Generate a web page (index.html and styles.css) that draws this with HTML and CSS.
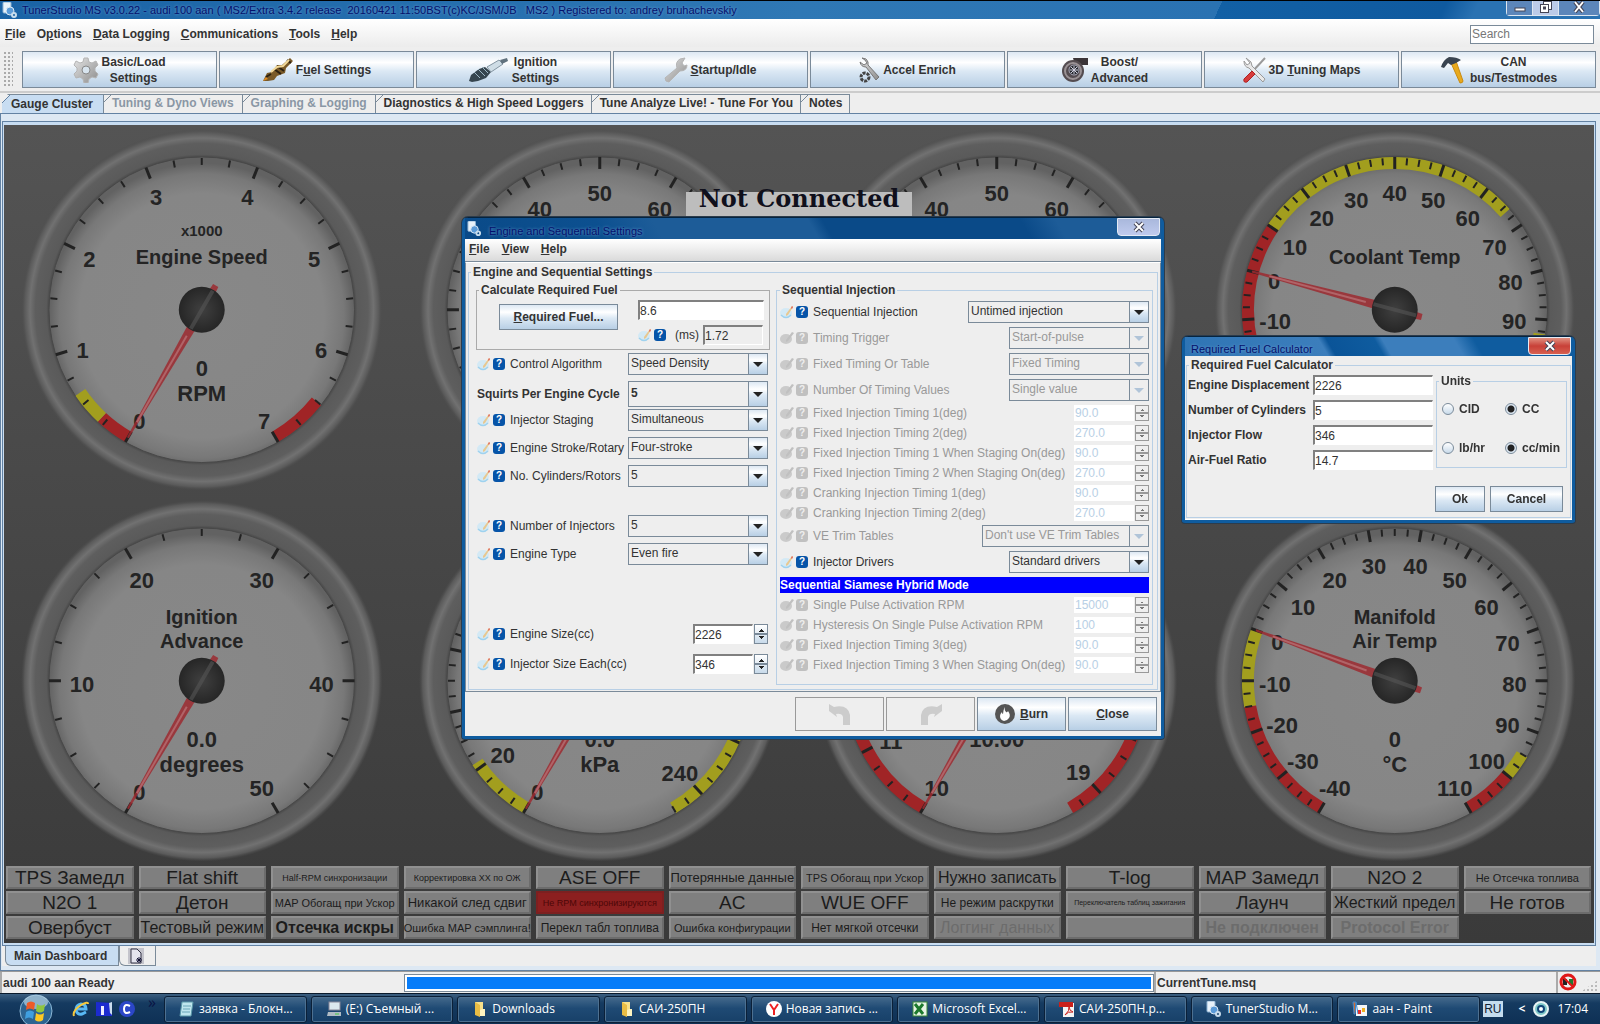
FILE: index.html
```html
<!DOCTYPE html>
<html lang="ru">

<head>
    <meta charset="UTF-8">
    <meta name="viewport" content="width=device-width, initial-scale=1.0">
    <title>TunerStudio MS</title>
    <link rel="stylesheet" href="styles.css">
</head>

<body>
    <!-- shared icons -->
    <svg class="defs" width="0" height="0">
        <defs>
            <symbol id="note" viewBox="0 0 14 14">
                <ellipse cx="6" cy="8" rx="6" ry="5" fill="#d3e9f5" />
                <path d="M1 10q5 5 10 0" fill="none" stroke="#9fd2ee" stroke-width="1.5" />
                <path d="M6 9l6-8 1 1-5 8-2 1z" fill="#e8c890" />
                <path d="M12 1l1 1-1 2-1-1z" fill="#e0665a" />
            </symbol>
            <symbol id="note-off" viewBox="0 0 14 14">
                <ellipse cx="6" cy="8" rx="6" ry="5" fill="#cacaca" />
                <path d="M6 9l6-8 2 1-6 8-2 1z" fill="#c0c0c0" />
            </symbol>
            <symbol id="app" viewBox="0 0 16 16">
                <rect x="1" y="0" width="8" height="11" rx="1" fill="#e8f2fa" stroke="#8fb4d4" />
                <circle cx="8" cy="9" r="4" fill="#5b9bd8" stroke="#dceaf6" />
                <circle cx="12" cy="13" r="2" fill="none" stroke="#c8dcec" stroke-width="2" />
            </symbol>
            <symbol id="folder" viewBox="0 0 16 16">
                <path d="M3 1h8v13H3z" fill="#f7e08a" />
                <path d="M3 1l5 3v12l-5-2z" fill="#e9bd45" />
                <path d="M11 8h2v7H8V9z" fill="#fdf3c0" />
            </symbol>
            <radialGradient id="face" cx="50%" cy="52%" r="50%">
                <stop offset="0" stop-color="#888" />
                <stop offset=".8" stop-color="#868686" />
                <stop offset=".93" stop-color="#787878" />
                <stop offset="1" stop-color="#626262" />
            </radialGradient>
            <radialGradient id="bezel">
                <stop offset=".84" stop-color="#444" />
                <stop offset=".86" stop-color="#5a5a5a" />
                <stop offset=".92" stop-color="#5e5e5e" />
                <stop offset=".95" stop-color="#717171" />
                <stop offset=".98" stop-color="#5a5a5a" />
                <stop offset="1" stop-color="#4c4c4c" stop-opacity="0" />
            </radialGradient>
            <radialGradient id="hub">
                <stop offset="0" stop-color="#404040" />
                <stop offset="1" stop-color="#262626" />
            </radialGradient>
            <linearGradient id="metal" x1="0" y1="0" x2="1" y2="1">
                <stop offset="0" stop-color="#e4e4e4" />
                <stop offset="1" stop-color="#8c8c8c" />
            </linearGradient>
        </defs>
    </svg>

    <header class="titlebar">
        <svg width="16" height="16"><use href="#app" /></svg>
        <span class="title-text">TunerStudio MS v3.0.22 - audi 100 aan ( MS2/Extra 3.4.2 release&nbsp; 20160421 11:50BST(c)KC/JSM/JB&nbsp;&nbsp; MS2 ) Registered to: andrey bruhachevskiy</span>
        <div class="win-buttons">
            <button type="button" aria-label="Minimize"><svg width="12" height="12" viewBox="0 0 12 12"><rect x="1" y="7" width="10" height="3" fill="#fff" stroke="#445" /></svg></button>
            <button type="button" class="light" aria-label="Restore"><svg width="12" height="12" viewBox="0 0 12 12" fill="#fff" stroke="#445"><rect x="3.500" y=".5" width="8" height="8" /><rect x=".5" y="3.500" width="8" height="8" /><rect x="3.500" y="6" width="2" height="2" /></svg></button>
            <button type="button" aria-label="Close"><svg width="12" height="12" viewBox="0 0 12 12"><path d="M2 1l8 10M10 1L2 11" stroke="#445" stroke-width="4" /><path d="M2 1l8 10M10 1L2 11" stroke="#fff" stroke-width="2" /></svg></button>
        </div>
    </header>

    <nav class="menubar">
        <a href="#"><u>F</u>ile</a>
        <a href="#">O<u>p</u>tions</a>
        <a href="#"><u>D</u>ata Logging</a>
        <a href="#"><u>C</u>ommunications</a>
        <a href="#"><u>T</u>ools</a>
        <a href="#"><u>H</u>elp</a>
        <input class="search" type="text" placeholder="Search" aria-label="Search">
    </nav>

    <div class="toolbar">
        <span class="grip"></span>
        <button type="button">
            <svg width="26" height="26" viewBox="0 0 26 26"><path d="M11 1h4l1 4 3 1 4-2 2 4-3 3v3l3 3-2 4-4-1-3 2-1 4h-4l-1-4-3-2-4 1-2-4 3-3v-3L1 8l2-4 4 2 3-1z" fill="url(#metal)" stroke="#b4b4b4" /><circle cx="13" cy="13" r="4" fill="#d8e4ee" stroke="#888" /></svg>
            <span>Basic/Load<br>Settings</span>
        </button>
        <button type="button">
            <svg width="32" height="26" viewBox="0 0 32 26"><path d="M1 24l4-8 5-1 5-7 5 0 8-7 3 3-7 7-1 5-8 3-3 4-6 1z" fill="#7a5a28" /><path d="M4 20l5-3M12 12l7 5M15 9l7 5M25 3l4 3" stroke="#2c2010" stroke-width="2" /><path d="M9 15l6-5 6-1 6-6" fill="none" stroke="#f2d898" stroke-width="2" /><path d="M1 24l3-4 2 2z" fill="#e08a20" /></svg>
            <span>F<u>u</u>el Settings</span>
        </button>
        <button type="button">
            <svg width="42" height="26" viewBox="0 0 42 26"><path d="M1 24l2-6 8-6 6-2 6 5-5 6-8 3-6 1z" fill="#36454f" /><path d="M6 15l6 6M10 12l7 7M14 10l6 6" stroke="#9fb8c6" stroke-width="1" /><path d="M19 10l12-7 4 4-12 8z" fill="#cfdde6" stroke="#8395a2" /><path d="M32 3l7-2 1 3-6 3z" fill="#61727e" /></svg>
            <span>Ignition<br>Settings</span>
        </button>
        <button type="button">
            <svg width="24" height="26" viewBox="0 0 24 26"><path d="M1 21L13 11q-2-6 3-9l5-1-3 5 2 3 3-1q0 6-7 6L5 25q-4 0-4-4z" fill="url(#metal)" stroke="#b5b5b5" /></svg>
            <span><u>S</u>tartup/Idle</span>
        </button>
        <button type="button">
            <svg width="22" height="26" viewBox="0 0 22 26"><path d="M3 1q5 0 6 4l0 3 11 12-3 3L7 10q-5 0-6-5l4 3 3-2-2-3z" fill="url(#metal)" stroke="#777" /><circle cx="6" cy="20" r="4" fill="none" stroke="#444" stroke-width="3" stroke-dasharray="3 1" /></svg>
            <span>Accel Enrich</span>
        </button>
        <button type="button">
            <svg width="28" height="26" viewBox="0 0 28 26"><path d="M12 1h15v7H14z" fill="#3b3538" /><circle cx="12" cy="14" r="11" fill="#544c50" /><circle cx="12" cy="14" r="8" fill="none" stroke="#9a9295" stroke-width="2" /><circle cx="13" cy="13" r="5" fill="#26282c" stroke="#aab" /><path d="M13 9v8M9 13h8M10 10l6 6M16 10l-6 6" stroke="#ccd" /></svg>
            <span>Boost/<br>Advanced</span>
        </button>
        <button type="button">
            <svg width="24" height="26" viewBox="0 0 24 26"><path d="M22 1L9 15" stroke="#9a9a9a" stroke-width="2" /><path d="M3 1l5 4 1 4 13 13-2 3L6 11q-5-1-5-7l3 4 3-2z" fill="#e8e8e8" stroke="#999" /><path d="M9 14l3 3-8 8q-4 1-3-3z" fill="#d63c3c" stroke="#b02020" /></svg>
            <span>3D <u>T</u>uning Maps</span>
        </button>
        <button type="button" class="hammer">
            <svg width="26" height="28" viewBox="0 0 26 28"><path d="M11 7l5-2 7 20q0 2-3 2z" fill="#e8a91c" stroke="#c98a10" /><path d="M1 11q2-7 8-10 8 0 12 3l-5 3-5 2-3-2-4 5z" fill="#3a4450" /></svg>
            <span>CAN<br>bus/Testmodes</span>
        </button>
    </div>

    <nav class="tabs">
        <a href="#" class="tab active">Gauge Cluster</a>
        <a href="#" class="tab off">Tuning &amp; Dyno Views</a>
        <a href="#" class="tab off">Graphing &amp; Logging</a>
        <a href="#" class="tab">Diagnostics &amp; High Speed Loggers</a>
        <a href="#" class="tab">Tune Analyze Live! - Tune For You</a>
        <a href="#" class="tab">Notes</a>
    </nav>

    <main class="frame">
        <div class="frame-inner">
            <div class="dash">
                <div class="gauges" id="gauges"></div>
                <div class="indicators">
                    <span class="xl">TPS Замедл</span>
                    <span class="xl">Flat shift</span>
                    <span class="xs">Half-RPM синхронизации</span>
                    <span class="xs">Корректировка ХХ по ОЖ</span>
                    <span class="xl">ASE OFF</span>
                    <span class="md">Потерянные данные</span>
                    <span class="sm">TPS Обогащ при Ускор</span>
                    <span class="lg">Нужно записать</span>
                    <span class="xl">T-log</span>
                    <span class="xl">MAP Замедл</span>
                    <span class="xl">N2O 2</span>
                    <span class="sm">Не Отсечка топлива</span>

                    <span class="xl">N2O 1</span>
                    <span class="xl">Детон</span>
                    <span class="sm">MAP Обогащ при Ускор</span>
                    <span class="md">Никакой след сдвиг</span>
                    <span class="xs alert">Не RPM синхронизируются</span>
                    <span class="xl">AC</span>
                    <span class="xl">WUE OFF</span>
                    <span class="mid">Не режим раскрутки</span>
                    <span class="tiny">Переключатель таблиц зажигания</span>
                    <span class="xl">Лаунч</span>
                    <span class="lg">Жесткий предел</span>
                    <span class="xl">Не готов</span>

                    <span class="xl">Овербуст</span>
                    <span class="lg">Тестовый режим</span>
                    <span class="lg strong">Отсечка искры</span>
                    <span class="sm">Ошибка MAP сэмплинга!</span>
                    <span class="mid">Перекл табл топлива</span>
                    <span class="sm">Ошибка конфигурации</span>
                    <span class="mid">Нет мягкой отсечки</span>
                    <span class="lg faint">Логгинг данных</span>
                    <span></span>
                    <span class="lg strong faint">Не подключен</span>
                    <span class="lg strong faint">Protocol Error</span>
                </div>
                <div class="not-connected">Not Connected</div>
            </div>
        </div>
        <nav class="dash-tabs">
            <a href="#" class="active">Main Dashboard</a>
            <a href="#" aria-label="Add dashboard"><svg width="16" height="16" viewBox="0 0 16 16"><rect width="16" height="16" fill="#c4c4cc" /><path d="M3 1h6l4 4v10H3z" fill="#e4e4ee" stroke="#334" /><path d="M11 9v6M8 12h6M9 10l4 4M13 10l-4 4" stroke="#113" /></svg></a>
        </nav>
    </main>

    <footer class="status">
        <span class="cell ready">audi 100 aan Ready</span>
        <progress value="100" max="100" aria-label="Progress"></progress>
        <span class="cell tune">CurrentTune.msq</span>
        <span class="cell link"><svg width="18" height="18" viewBox="0 0 18 18"><path d="M4 6h4v6H4z" fill="#222" /><path d="M10 6h4v6h-4z" fill="#1f7a30" /><circle cx="9" cy="9" r="7" fill="none" stroke="#e01818" stroke-width="3" /><path d="M4 4l10 10" stroke="#e01818" stroke-width="2" /></svg></span>
        <span class="resize"></span>
    </footer>

    <footer class="taskbar">
        <button type="button" class="start" aria-label="Start"><svg width="36" height="30" viewBox="0 0 36 30"><circle cx="18" cy="17" r="16" fill="#2d6491" stroke="#8db8d6" /><ellipse cx="18" cy="8" rx="12" ry="7" fill="#b8d3e4" opacity=".7" /><path d="M9 9q4-3 8 0l-1 7q-4-3-8 0z" fill="#ee5a28" /><path d="M19 10q4 3 8 0l-1 7q-4 3-8 0z" fill="#8fc63f" /><path d="M8 18q4-3 8 0l-1 7q-4-3-8 0z" fill="#3f9fe0" /><path d="M18 19q4 3 8 0l-1 7q-4 3-8 0z" fill="#fdc823" /></svg></button>
        <div class="quick">
            <svg width="18" height="18" viewBox="0 0 18 18"><path d="M5 9h9q0-5-5-5-5 1-5 6 1 5 6 4l4-2" fill="none" stroke="#58b8f4" stroke-width="3" /><path d="M2 16q-2-5 7-11 7-4 7-1" fill="none" stroke="#f6c83c" stroke-width="2" /></svg>
            <svg width="16" height="16" viewBox="0 0 16 16"><path d="M0 1l16 1v13H0z" fill="#1c2bd0" /><path d="M5 5h3v9H5z" fill="#eef" /><path d="M13 2l3-1v13l-2-2z" fill="#cde" /></svg>
            <svg width="18" height="18" viewBox="0 0 18 18"><circle cx="9" cy="9" r="8" fill="#2b46c8" /><path d="M12 6q-6-3-6 3t6 3" fill="none" stroke="#fff" stroke-width="2" /></svg>
            <span class="more">»</span>
        </div>
        <div class="tasks">
            <button type="button"><svg width="16" height="16" viewBox="0 0 16 16"><path d="M3 1h11l-2 14H1z" fill="#bfe6ee" stroke="#5a98a8" /><path d="M4 5h8M4 8h7M3 11h8" stroke="#6aa6b8" /></svg>заявка - Блокн...</button>
            <button type="button"><svg width="16" height="16" viewBox="0 0 16 16"><rect x="3" y="1" width="11" height="8" fill="#dce8ee" stroke="#889" /><path d="M2 11h13v4H1z" fill="#b0bcc4" /><path d="M9 13h4" stroke="#4c4" /></svg>(E:) Съемный ...</button>
            <button type="button"><svg width="16" height="16"><use href="#folder" /></svg>Downloads</button>
            <button type="button"><svg width="16" height="16"><use href="#folder" /></svg>САИ-250ПН</button>
            <button type="button"><svg width="16" height="16" viewBox="0 0 16 16"><circle cx="8" cy="8" r="8" fill="#fff" /><path d="M4 3l4 6 4-6M8 8v6" fill="none" stroke="#e22" stroke-width="2" /></svg>Новая запись ...</button>
            <button type="button"><svg width="16" height="16" viewBox="0 0 16 16"><rect x="1" y="1" width="14" height="14" fill="#e8f4e4" stroke="#3a8a3a" /><path d="M3 3l8 10M11 3L3 13" stroke="#1d7a2d" stroke-width="3" /></svg>Microsoft Excel...</button>
            <button type="button"><svg width="16" height="16" viewBox="0 0 16 16"><path d="M4 2h11v14H4z" fill="#f4f4f4" /><rect y="1" width="14" height="5" fill="#c8201c" /><path d="M6 14q5-4 4-9 0 5 4 6-5-1-8 3z" fill="none" stroke="#c8201c" /></svg>САИ-250ПН.p...</button>
            <button type="button"><svg width="16" height="16"><use href="#app" /></svg>TunerStudio M...</button>
            <button type="button"><svg width="16" height="16" viewBox="0 0 16 16"><rect x="4" y="4" width="11" height="11" fill="#f4f6f8" /><path d="M1 1h3l-1 12H2zM4 1l2 12" fill="#d06a30" stroke="#3b8ad0" /><rect x="6" y="9" width="3" height="4" fill="#e03030" /><rect x="10" y="7" width="3" height="4" fill="#f0b020" /></svg>аан - Paint</button>
        </div>
        <div class="tray">
            <span class="lang">RU</span>
            <span class="arrow">&lt;</span>
            <svg width="16" height="16" viewBox="0 0 16 16"><circle cx="8" cy="8" r="7" fill="#7ec8c8" stroke="#e8f4f4" stroke-width="2" /><circle cx="8" cy="8" r="3" fill="#fff" stroke="#147" stroke-width="2" /></svg>
            <span class="clock">17:04</span>
        </div>
    </footer>

    <!-- engine settings window -->
    <section class="dialog settings">
        <header class="dialog-title">
            <svg width="15" height="15"><use href="#app" /></svg>
            <span class="title-text">Engine and Sequential Settings</span>
            <button type="button" class="close" aria-label="Close window"><svg width="14" height="12" viewBox="0 0 14 12"><path d="M3 2l8 8M11 2l-8 8" stroke="#445" stroke-width="4" /><path d="M3 2l8 8M11 2l-8 8" stroke="#fff" stroke-width="2" /></svg></button>
        </header>
        <nav class="dialog-menu">
            <a href="#"><u>F</u>ile</a>
            <a href="#"><u>V</u>iew</a>
            <a href="#"><u>H</u>elp</a>
        </nav>
        <div class="dialog-panel">
            <fieldset class="group">
                <legend>Engine and Sequential Settings</legend>
                <div class="columns">
                    <div class="left">
                        <fieldset class="group calc">
                            <legend>Calculate Required Fuel</legend>
                            <button type="button" class="btn"><u>R</u>equired Fuel...</button>
                            <div class="calc-values">
                                <input class="text" type="text" value="8.6" aria-label="Required fuel">
                                <div class="ms-row">
                                    <svg class="note" width="14" height="14"><use href="#note" /></svg><span class="help">?</span>
                                    <label for="ms">(ms)</label>
                                    <input class="text" type="text" id="ms" value="1.72" readonly>
                                </div>
                            </div>
                        </fieldset>

                        <div class="row first">
                            <svg class="note" width="14" height="14"><use href="#note" /></svg><span class="help">?</span>
                            <label for="algorithm">Control Algorithm</label>
                            <span class="combo"><select id="algorithm"><option>Speed Density</option></select></span>
                        </div>
                        <div class="row squirts">
                            <label for="squirts">Squirts Per Engine Cycle</label>
                            <span class="combo"><select id="squirts"><option>5</option></select></span>
                        </div>
                        <div class="row">
                            <svg class="note" width="14" height="14"><use href="#note" /></svg><span class="help">?</span>
                            <label for="staging">Injector Staging</label>
                            <span class="combo"><select id="staging"><option>Simultaneous</option></select></span>
                        </div>
                        <div class="row">
                            <svg class="note" width="14" height="14"><use href="#note" /></svg><span class="help">?</span>
                            <label for="stroke">Engine Stroke/Rotary</label>
                            <span class="combo"><select id="stroke"><option>Four-stroke</option></select></span>
                        </div>
                        <div class="row">
                            <svg class="note" width="14" height="14"><use href="#note" /></svg><span class="help">?</span>
                            <label for="cylinders">No. Cylinders/Rotors</label>
                            <span class="combo"><select id="cylinders"><option>5</option></select></span>
                        </div>
                        <div class="row injectors">
                            <svg class="note" width="14" height="14"><use href="#note" /></svg><span class="help">?</span>
                            <label for="injectors">Number of Injectors</label>
                            <span class="combo"><select id="injectors"><option>5</option></select></span>
                        </div>
                        <div class="row">
                            <svg class="note" width="14" height="14"><use href="#note" /></svg><span class="help">?</span>
                            <label for="enginetype">Engine Type</label>
                            <span class="combo"><select id="enginetype"><option>Even fire</option></select></span>
                        </div>
                        <div class="row engine-size">
                            <svg class="note" width="14" height="14"><use href="#note" /></svg><span class="help">?</span>
                            <label for="enginesize">Engine Size(cc)</label>
                            <span class="spin"><input class="text" type="text" id="enginesize" value="2226"><i></i></span>
                        </div>
                        <div class="row injector-size">
                            <svg class="note" width="14" height="14"><use href="#note" /></svg><span class="help">?</span>
                            <label for="injectorsize">Injector Size Each(cc)</label>
                            <span class="spin"><input class="text" type="text" id="injectorsize" value="346"><i></i></span>
                        </div>
                    </div>

                    <fieldset class="group right">
                        <legend>Sequential Injection</legend>
                        <div class="row">
                            <svg class="note" width="14" height="14"><use href="#note" /></svg><span class="help">?</span>
                            <label for="sequential">Sequential Injection</label>
                            <span class="combo wide"><select id="sequential"><option>Untimed injection</option></select></span>
                        </div>
                        <div class="row off">
                            <svg class="note" width="14" height="14"><use href="#note-off" /></svg><span class="help">?</span>
                            <label for="trigger">Timing Trigger</label>
                            <span class="combo"><select id="trigger" disabled><option>Start-of-pulse</option></select></span>
                        </div>
                        <div class="row off">
                            <svg class="note" width="14" height="14"><use href="#note-off" /></svg><span class="help">?</span>
                            <label for="timing">Fixed Timing Or Table</label>
                            <span class="combo"><select id="timing" disabled><option>Fixed Timing</option></select></span>
                        </div>
                        <div class="row off">
                            <svg class="note" width="14" height="14"><use href="#note-off" /></svg><span class="help">?</span>
                            <label for="values">Number Of Timing Values</label>
                            <span class="combo"><select id="values" disabled><option>Single value</option></select></span>
                        </div>
                        <div class="row off">
                            <svg class="note" width="14" height="14"><use href="#note-off" /></svg><span class="help">?</span>
                            <label for="fixed1">Fixed Injection Timing 1(deg)</label>
                            <span class="spin"><input type="text" id="fixed1" value="90.0" disabled><i></i></span>
                        </div>
                        <div class="row off">
                            <svg class="note" width="14" height="14"><use href="#note-off" /></svg><span class="help">?</span>
                            <label for="fixed2">Fixed Injection Timing 2(deg)</label>
                            <span class="spin"><input type="text" id="fixed2" value="270.0" disabled><i></i></span>
                        </div>
                        <div class="row off">
                            <svg class="note" width="14" height="14"><use href="#note-off" /></svg><span class="help">?</span>
                            <label for="staged1">Fixed Injection Timing 1 When Staging On(deg)</label>
                            <span class="spin"><input type="text" id="staged1" value="90.0" disabled><i></i></span>
                        </div>
                        <div class="row off">
                            <svg class="note" width="14" height="14"><use href="#note-off" /></svg><span class="help">?</span>
                            <label for="staged2">Fixed Injection Timing 2 When Staging On(deg)</label>
                            <span class="spin"><input type="text" id="staged2" value="270.0" disabled><i></i></span>
                        </div>
                        <div class="row off">
                            <svg class="note" width="14" height="14"><use href="#note-off" /></svg><span class="help">?</span>
                            <label for="crank1">Cranking Injection Timing 1(deg)</label>
                            <span class="spin"><input type="text" id="crank1" value="90.0" disabled><i></i></span>
                        </div>
                        <div class="row off">
                            <svg class="note" width="14" height="14"><use href="#note-off" /></svg><span class="help">?</span>
                            <label for="crank2">Cranking Injection Timing 2(deg)</label>
                            <span class="spin"><input type="text" id="crank2" value="270.0" disabled><i></i></span>
                        </div>
                        <div class="row off">
                            <svg class="note" width="14" height="14"><use href="#note-off" /></svg><span class="help">?</span>
                            <label for="trim">VE Trim Tables</label>
                            <span class="combo medium"><select id="trim" disabled><option>Don't use VE Trim Tables</option></select></span>
                        </div>
                        <div class="row">
                            <svg class="note" width="14" height="14"><use href="#note" /></svg><span class="help">?</span>
                            <label for="drivers">Injector Drivers</label>
                            <span class="combo"><select id="drivers"><option>Standard drivers</option></select></span>
                        </div>
                        <h3>Sequential Siamese Hybrid Mode</h3>
                        <div class="row off">
                            <svg class="note" width="14" height="14"><use href="#note-off" /></svg><span class="help">?</span>
                            <label for="pulse">Single Pulse Activation RPM</label>
                            <span class="spin"><input type="text" id="pulse" value="15000" disabled><i></i></span>
                        </div>
                        <div class="row off">
                            <svg class="note" width="14" height="14"><use href="#note-off" /></svg><span class="help">?</span>
                            <label for="hyst">Hysteresis On Single Pulse Activation RPM</label>
                            <span class="spin"><input type="text" id="hyst" value="100" disabled><i></i></span>
                        </div>
                        <div class="row off">
                            <svg class="note" width="14" height="14"><use href="#note-off" /></svg><span class="help">?</span>
                            <label for="fixed3">Fixed Injection Timing 3(deg)</label>
                            <span class="spin"><input type="text" id="fixed3" value="90.0" disabled><i></i></span>
                        </div>
                        <div class="row off">
                            <svg class="note" width="14" height="14"><use href="#note-off" /></svg><span class="help">?</span>
                            <label for="staged3">Fixed Injection Timing 3 When Staging On(deg)</label>
                            <span class="spin"><input type="text" id="staged3" value="90.0" disabled><i></i></span>
                        </div>
                    </fieldset>
                </div>
            </fieldset>
        </div>
        <div class="dialog-buttons">
            <button type="button" class="btn" disabled aria-label="Undo"><svg width="24" height="24" viewBox="0 0 24 24"><path d="M1 2l5 3q14-3 16 8v10h-7v-8q-1-4-7-3l1 3L1 9z" fill="#ccc" /></svg></button>
            <button type="button" class="btn" disabled aria-label="Redo"><svg width="24" height="24" viewBox="0 0 24 24"><path d="M23 2l-5 3Q4 2 2 13v10h7v-8q1-4 7-3l-1 3 8-6z" fill="#ccc" /></svg></button>
            <button type="button" class="btn"><svg width="20" height="20" viewBox="0 0 20 20"><circle cx="10" cy="10" r="10" fill="#555" /><path d="M10 3q-1 3 1 5 1 1 2-1 3 4 1 7-2 3-5 3-4-1-4-5 0-2 2-4 0 2 1 2 0-4 2-7z" fill="#fff" /></svg><span><u>B</u>urn</span></button>
            <button type="button" class="btn"><span><u>C</u>lose</span></button>
        </div>
    </section>

    <!-- required fuel window -->
    <section class="dialog calculator">
        <header class="dialog-title">
            <span class="title-text">Required Fuel Calculator</span>
            <button type="button" class="close red" aria-label="Close calculator"><svg width="14" height="12" viewBox="0 0 14 12"><path d="M3 2l8 8M11 2l-8 8" stroke="#445" stroke-width="4" /><path d="M3 2l8 8M11 2l-8 8" stroke="#fff" stroke-width="2" /></svg></button>
        </header>
        <div class="calculator-body">
            <fieldset class="group">
                <legend>Required Fuel Calculator</legend>
                <div class="fields">
                    <label for="displacement">Engine Displacement</label>
                    <input class="text" type="text" id="displacement" value="2226" autofocus>
                    <label for="numcyl">Number of Cylinders</label>
                    <input class="text" type="text" id="numcyl" value="5">
                    <label for="flow">Injector Flow</label>
                    <input class="text" type="text" id="flow" value="346">
                    <label for="ratio">Air-Fuel Ratio</label>
                    <input class="text" type="text" id="ratio" value="14.7">
                </div>
                <fieldset class="group units">
                    <legend>Units</legend>
                    <label><input type="radio" name="volume">CID</label>
                    <label><input type="radio" name="volume" checked>CC</label>
                    <label><input type="radio" name="rate">lb/hr</label>
                    <label><input type="radio" name="rate" checked>cc/min</label>
                </fieldset>
                <div class="calculator-buttons">
                    <button type="button" class="btn ok">Ok</button>
                    <button type="button" class="btn cancel">Cancel</button>
                </div>
            </fieldset>
        </div>
    </section>

    <script src="gauges.js"></script>
</body>

</html>
```
FILE: styles.css
```css
* {
    box-sizing: border-box;
}

body {
    margin: 0;
    height: 100vh;
    display: flex;
    flex-direction: column;
    position: relative;
    overflow: hidden;
    background: #eee;
    color: #333;
    font: 12px/16px "Liberation Sans", sans-serif;
}

button,
input,
select {
    font: inherit;
    color: inherit;
    margin: 0;
}

a {
    color: inherit;
    text-decoration: none;
}

svg {
    flex: none;
}

.defs {
    position: absolute;
}

/* title bar and menu */
.titlebar {
    flex: none;
    height: 19px;
    display: flex;
    align-items: center;
    gap: 4px;
    padding-left: 2px;
    border-top: 1px solid #000;
    background: linear-gradient(115deg, #1a63a6 0, #2f78b5 50%, #2a72b2 76%, #1260a5 76%, #0f5a9f 90%, #2a72b2 92%);
}

.title-text {
    font-size: 11px;
    color: #04106c;
    white-space: nowrap;
    text-shadow: 0 0 3px #6fa0d0;
}

.win-buttons {
    display: flex;
    align-self: flex-start;
    margin-left: auto;
    border: 1px solid #dde6f0;
    border-top: 0;
    border-radius: 0 0 4px 4px;
}

.win-buttons button {
    width: 26px;
    height: 14px;
    padding: 0;
    border: 0;
    border-right: 1px solid #dde6f0;
    background: #5c86ba;
    line-height: 12px;
}

.win-buttons button:last-child {
    width: 40px;
    border: 0;
}

.win-buttons .light {
    background: #bccbe8;
}

.menubar {
    flex: none;
    height: 28px;
    display: flex;
    align-items: center;
    gap: 11px;
    padding: 2px 6px 0 5px;
    font-weight: bold;
    background: linear-gradient(#fff, #ececec);
}

.search {
    width: 124px;
    height: 19px;
    margin-left: auto;
    padding: 0 1px;
    border: 1px solid #7a8a99;
    background: #fff;
    font-weight: normal;
}

.search::placeholder {
    color: #777;
}

.toolbar {
    flex: none;
    height: 46px;
    display: flex;
    gap: 2px;
    padding: 4px 4px 3px 3px;
    border-bottom: 2px solid #ccc;
}

.grip {
    width: 10px;
    margin-right: 7px;
    background: radial-gradient(circle, #aaa 1px, transparent 1px) 0 0 / 4px 4px;
}

.toolbar button {
    flex: 1;
    display: flex;
    align-items: center;
    justify-content: center;
    gap: 2px;
    padding: 0;
    border: 1px solid #7a8a99;
    background: linear-gradient(#dde8f3, #fff 30%, #dbe8f4 55%, #b8cfe5);
    font-weight: bold;
}

.toolbar .hammer {
    gap: 4px;
}

/* tabs */
.tabs {
    flex: none;
    display: flex;
    padding: 1px 0 0 2px;
}

.tab {
    height: 19px;
    padding: 0 7px 0 8px;
    border: 1px solid #7a8a99;
    border-bottom: 0;
    border-left: 0;
    font-weight: bold;
    background: linear-gradient(135deg, transparent 5px, #7a8a99 5px, #7a8a99 6px, #eee 6px) border-box;
}

.tab.active {
    padding: 1px 10px 0 9px;
    clip-path: polygon(6px 0, 100% 0, 100% 100%, 0 100%, 0 6px);
    background: linear-gradient(135deg, transparent 5px, #6382a3 5px, #6382a3 6px, #c8ddf2 6px);
}

.tab.off {
    color: #8a97a5;
    padding-right: 8px;
}

.frame {
    flex: 1;
    min-height: 0;
    display: flex;
    flex-direction: column;
    padding: 7px 4px 4px 1px;
    border: 1px solid #6382a3;
    border-right: 0;
    background: #dde8f3;
}

.frame-inner {
    flex: 1;
    min-height: 0;
    display: flex;
    padding: 3px 1px 2px;
    border: 1px solid #6382a3;
    background: #c8ddf2;
}

.dash {
    flex: 1;
    min-width: 0;
    display: flex;
    flex-direction: column;
    position: relative;
    background: linear-gradient(#545454, #3a3a3a);
}

.gauges {
    flex: 1;
    min-height: 0;
    display: grid;
    grid-template-columns: repeat(4, minmax(0, 1fr));
    grid-template-rows: repeat(2, minmax(0, 1fr));
}

.gauges svg {
    width: 100%;
    height: 100%;
    overflow: visible;
}

.gauges text {
    font-family: "Liberation Sans", sans-serif;
    font-weight: bold;
    text-anchor: middle;
    dominant-baseline: central;
    fill: #242424;
}

.gauges .number,
.gauges .value {
    font-size: 22px;
}

.gauges .title {
    font-size: 20px;
}

.gauges .scale {
    font-size: 15px;
}

.indicators {
    display: grid;
    grid-template-columns: repeat(12, minmax(0, 1fr));
    grid-auto-rows: 23px;
    gap: 2px 5px;
    padding: 0 3px 4px 2px;
}

.indicators span {
    display: flex;
    align-items: center;
    justify-content: center;
    white-space: nowrap;
    border: 2px solid;
    border-color: #909090 #6c6c6c #6c6c6c #909090;
    background: #7f7f7f;
    color: #1c1c1c;
}

.indicators .xl {
    font-size: 19px;
}

.indicators .lg {
    font-size: 16px;
}

.indicators .md {
    font-size: 13px;
}

.indicators .mid {
    font-size: 12px;
}

.indicators .sm {
    font-size: 11px;
}

.indicators .xs {
    font-size: 9px;
}

.indicators .tiny {
    font-size: 7px;
}

.indicators .strong {
    font-weight: bold;
}

.indicators .alert {
    background: #8c1f1f;
    border-color: #7c2020;
    color: #4c0808;
}

.indicators .faint {
    color: #6c6c6c;
}

.not-connected {
    position: absolute;
    top: 67px;
    left: 50%;
    width: 226px;
    height: 26px;
    margin-left: -113px;
    background: #bdbdbd;
    color: #10101c;
    font: bold 24px/14px "DejaVu Serif", serif;
    text-align: center;
}

.dash-tabs {
    flex: none;
    display: flex;
    padding-left: 3px;
    background: #eee;
    font-weight: bold;
}

.dash-tabs a {
    height: 20px;
    padding: 2px 11px 0 8px;
    border: 1px solid #7a8a99;
    border-top: 0;
    border-bottom-left-radius: 6px;
}

.dash-tabs .active {
    background: #c8ddf2;
}

/* status line */
.status {
    flex: none;
    height: 22px;
    display: flex;
    border-top: 1px solid #999;
    font-weight: bold;
}

.cell {
    padding: 3px 0 0 1px;
    border-left: 2px solid #aaa;
    white-space: nowrap;
}

.cell.ready {
    width: 404px;
}

.status progress {
    appearance: none;
    flex: 1;
    height: 18px;
    margin-top: 2px;
    padding: 2px;
    border: 1px solid #7a8a99;
    background: #fff;
}

.status progress::-webkit-progress-bar {
    background: #fff;
}

.status progress::-webkit-progress-value {
    background: #067cf9;
}

.cell.tune {
    width: 402px;
}

.cell.link {
    width: 24px;
    padding-top: 1px;
}

.resize {
    width: 16px;
    margin: 8px 2px 2px 2px;
    background: radial-gradient(circle, #bbb 1px, transparent 1px) 0 0 / 4px 4px;
    clip-path: polygon(100% 0, 100% 100%, 0 100%);
}

/* taskbar */
.taskbar {
    flex: none;
    height: 31px;
    display: flex;
    align-items: center;
    color: #fff;
    border-top: 1px solid #0a1a2c;
    background: linear-gradient(#3c5f80, #153a60 30%, #0e3054);
    font-family: "Open Sans", sans-serif;
}

.start {
    width: 36px;
    height: 30px;
    margin-left: 18px;
    padding: 0;
    border: 0;
    background: none;
}

.quick {
    width: 110px;
    display: flex;
    align-items: center;
    gap: 6px;
    padding-left: 18px;
}

.more {
    margin: -14px 0 0 6px;
    color: #0a1444;
    font-size: 16px;
}

.tasks {
    flex: 1;
    min-width: 0;
    display: flex;
    gap: 4px;
}

.tasks button {
    flex: 1;
    min-width: 0;
    height: 27px;
    display: flex;
    align-items: center;
    gap: 4px;
    padding: 0 0 0 14px;
    border: 1px solid #0b2038;
    border-radius: 3px;
    box-shadow: inset 0 0 0 1px #4d7090;
    background: linear-gradient(#456a8c, #1f4a74 45%, #174068);
    white-space: nowrap;
    overflow: hidden;
}

.tray {
    width: 120px;
    display: flex;
    align-items: center;
    justify-content: flex-end;
    gap: 8px;
    padding-right: 12px;
}

.lang {
    padding: 0 1px;
    background: #c4dcee;
    color: #123;
    font-family: "Liberation Sans", sans-serif;
}

.arrow {
    padding-left: 8px;
    font-weight: bold;
}

/* dialogs */
.dialog {
    position: absolute;
    display: flex;
    flex-direction: column;
    border: 3px solid #0f5c9f;
    border-top: 1px solid #06243f;
    border-radius: 6px 6px 3px 3px;
    background: #eee;
    box-shadow: 0 0 0 1px #2c3c4c;
}

.settings {
    top: 217px;
    left: 462px;
    width: 702px;
    height: 522px;
}

.dialog-title {
    flex: none;
    height: 21px;
    display: flex;
    align-items: center;
    gap: 7px;
    padding-left: 2px;
    background: linear-gradient(60deg, #0a4a88 0, #0c5090 20%, #1d5c98 28%, #1d5c98 50%, #0a4a88 52%, #0a4a88 80%, #1d5c98 85%);
}

.dialog-title .title-text {
    padding-top: 4px;
}

.close {
    align-self: flex-start;
    width: 43px;
    height: 18px;
    margin: 0 1px 0 auto;
    padding: 0;
    border: 1px solid #e4eaf4;
    border-radius: 0 0 4px 4px;
    background: linear-gradient(#a9b8dc, #c0cbee);
    line-height: 10px;
}

.close.red {
    background: linear-gradient(#e09080, #c84038 50%, #d86050);
}

.dialog-menu {
    flex: none;
    height: 23px;
    display: flex;
    align-items: center;
    gap: 12px;
    padding: 0 4px 2px;
    border-bottom: 1px solid #7a8a99;
    background: linear-gradient(#fff, #dadada);
    font-weight: bold;
}

.dialog-panel {
    padding: 1px 2px 1px 2px;
    border: 1px solid #7a8a99;
    border-top-color: #fff;
}

.group {
    min-width: 0;
    margin: 0;
    padding: 0;
    border: 1px solid #b8cfe5;
}

.group legend {
    margin-left: 2px;
    padding: 0 2px;
    font-weight: bold;
}

.columns {
    display: flex;
    justify-content: space-between;
    padding: 2px 4px 4px 7px;
}

.left {
    width: 294px;
}

.calc {
    display: flex;
    padding: 0 5px 4px 0;
    border-color: #aaa;
    height: 68px;
}

.btn {
    padding: 0;
    border: 1px solid #7a8a99;
    background: linear-gradient(#dde8f3, #fff 30%, #dbe8f4 55%, #b8cfe5);
    font-weight: bold;
}

.btn:disabled {
    background: #eee;
    border-color: #999;
}

.calc .btn {
    width: 120px;
    height: 26px;
    margin: 6px 20px 0 22px;
}

.calc-values {
    width: 127px;
}

.text {
    display: block;
    width: 100%;
    height: 20px;
    padding: 0;
    border: solid;
    border-width: 2px 1px 1px 2px;
    border-color: #808080 #fff #fff #808080;
    background: #fff;
}

.text:focus {
    outline: none;
}

.calc-values > .text {
    margin-top: 2px;
}

.ms-row {
    display: flex;
    align-items: center;
    margin-top: 5px;
}

.ms-row label {
    margin: 0 4px 0 9px;
}

.ms-row .text {
    width: 60px;
    background: #eee;
}

.note {
    margin-right: 2px;
}

.help {
    width: 12px;
    height: 12px;
    border-radius: 3px;
    background: #0654a8;
    color: #fff;
    font: bold 10px/12px "Liberation Sans", sans-serif;
    text-align: center;
}

.row {
    display: flex;
    align-items: center;
    min-height: 16px;
}

.row label {
    margin-left: 5px;
    white-space: nowrap;
}

.left .row {
    margin-top: 6px;
    padding: 0 2px 0 1px;
}

.left .row.first {
    margin-top: 3px;
}

.left .row.squirts {
    margin-bottom: 2px;
    font-weight: bold;
}

.left .row.squirts label {
    margin: 0;
}

.left .row.squirts + .row {
    margin-top: 0;
}

.left .row.injectors {
    margin-top: 28px;
}

.left .row.engine-size {
    margin-top: 59px;
}

.left .row.injector-size {
    margin-top: 10px;
}

.combo {
    position: relative;
    width: 140px;
    margin-left: auto;
}

.combo.wide {
    width: 181px;
}

.combo.medium {
    width: 167px;
}

.combo select {
    appearance: none;
    display: block;
    width: 100%;
    height: 22px;
    padding: 0 0 2px 2px;
    border: 1px solid #7a8a99;
    border-radius: 0;
    background: linear-gradient(#dde8f3, #fff 30%, #dbe8f4 55%, #b8cfe5) right / 19px 100% no-repeat, #eee;
}

.squirts select {
    height: 26px;
}

/* line and arrow over the right end of the select */
.combo::before {
    content: "";
    position: absolute;
    top: 0;
    bottom: 0;
    right: 19px;
    border-left: 1px solid #7a8a99;
}

.combo::after {
    content: "";
    position: absolute;
    top: 9px;
    right: 5px;
    border: solid transparent;
    border-width: 5px 5px 0;
    border-top-color: #222;
}

.squirts .combo::after {
    top: 11px;
}

.off .combo::after {
    border-top-color: #b0c4d8;
}

.combo select:disabled {
    background: #eee;
    color: #999;
    opacity: 1;
}

.off label {
    color: #999;
}

.off .help {
    background: #c0c0c0;
    color: #eee;
}

.spin {
    display: flex;
    gap: 1px;
    width: 75px;
    margin-left: auto;
}

.spin input {
    flex: 1;
    min-width: 0;
}

.spin input:disabled {
    height: 16px;
    padding: 0 1px;
    border: 0;
    background: #fff;
    color: #b8cfe5;
}

.spin i {
    width: 14px;
    border: 1px solid #7a8a99;
    background:
        conic-gradient(from 135deg at 50% 0, #222 90deg, transparent 0) center 4px / 5px 3px no-repeat,
        conic-gradient(from -45deg at 50% 100%, #222 90deg, transparent 0) center bottom 4px / 5px 3px no-repeat,
        linear-gradient(transparent 46%, #7a8a99 46%, #7a8a99 54%, transparent 54%),
        linear-gradient(#fff, #c8daea);
}

.off .spin i {
    background:
        conic-gradient(from 135deg at 50% 0, #777 90deg, transparent 0) center 3px / 4px 2px no-repeat,
        conic-gradient(from -45deg at 50% 100%, #777 90deg, transparent 0) center bottom 3px / 4px 2px no-repeat,
        linear-gradient(transparent 43%, #999 43%, #999 57%, transparent 57%);
    border-color: #999;
}

.right {
    display: flex;
    flex-direction: column;
    width: 377px;
    padding: 3px 3px 7px;
}

.right legend {
    margin-left: 0;
}

.right .row {
    margin-bottom: 4px;
}

.right .row label {
    margin-left: 5px;
}

.right h3 {
    margin: 0 0 4px;
    background: #00f;
    color: #fff;
    font-size: 12px;
    line-height: 16px;
}

.dialog-buttons {
    flex: 1;
    display: flex;
    align-items: center;
    justify-content: flex-end;
    gap: 2px;
    padding-right: 4px;
}

.dialog-buttons .btn {
    width: 89px;
    height: 34px;
    display: flex;
    align-items: center;
    justify-content: center;
    gap: 5px;
}

.calculator {
    top: 336px;
    left: 1182px;
    width: 393px;
    height: 187px;
}

.calculator .dialog-title {
    height: 19px;
    padding-left: 6px;
    background: linear-gradient(60deg, #2e74b4 0, #3c7ebc 36%, #0a5498 38%, #0f5c9f 50%, #3c7ebc 52%, #3c7ebc 70%, #0f5c9f 75%);
}

.calculator-body {
    flex: 1;
    padding: 1px;
    border-bottom: 1px solid #fff;
}

.calculator-body > .group {
    height: 100%;
    display: grid;
    grid-template-columns: 246px 131px;
    align-content: start;
    column-gap: 3px;
}

.fields {
    display: grid;
    grid-template-columns: 125px 120px;
    grid-auto-rows: 20px;
    align-items: center;
    gap: 5px 0;
    padding: 2px 0 0 1px;
    font-weight: bold;
}

.fields input {
    font-weight: normal;
}

.units {
    height: 95px;
    display: grid;
    grid-template-columns: 63px 1fr;
    align-items: center;
    font-weight: bold;
}

.units label {
    display: flex;
    align-items: center;
    gap: 5px;
    padding-left: 5px;
    white-space: nowrap;
}

.units input {
    appearance: none;
    width: 12px;
    height: 12px;
    border: 1px solid #7a8a99;
    border-radius: 50%;
    background: linear-gradient(#fff, #c8daea);
}

.units input:checked {
    background: radial-gradient(circle, #222 3px, #dde8f3 4px);
}

.calculator-buttons {
    grid-column: 1 / -1;
    display: flex;
    justify-content: flex-end;
    gap: 5px;
    margin-top: 16px;
    padding-right: 4px;
}

.calculator-buttons .btn {
    height: 26px;
}

.ok {
    width: 50px;
}

.cancel {
    width: 73px;
}
```
FILE: gauges.js
```js
const RED = '#a02426'
const YELLOW = '#a29e1e'

// scale runs 300 degrees, from lower left to lower right
// numbers: which numbers to write, all of them if left out
const gauges = [
    { title: ['Engine Speed'], scale: 'x1000', value: '0', units: 'RPM', min: 0, max: 7, step: 1, at: 0, zones: [[0, 0.3, RED], [0.3, 0.6, YELLOW], [6.5, 7, RED]] },
    { title: [], value: '', units: '', min: 0, max: 100, step: 10, at: 0, zones: [], numbers: [40, 50, 60] },
    { title: [], value: '', units: '', min: 0, max: 100, step: 10, at: 0, zones: [], numbers: [40, 50, 60] },
    { title: ['Coolant Temp'], value: '', units: '', min: -40, max: 120, step: 10, at: 0, zones: [[-40, 10, RED], [10, 66, YELLOW], [93, 105, YELLOW], [105, 120, RED]], numbers: [-10, 0, 10, 20, 30, 40, 50, 60, 70, 80, 90] },
    { title: ['Ignition', 'Advance'], value: '0.0', units: 'degrees', min: 0, max: 50, step: 10, at: 0, zones: [] },
    { title: [], value: '0.0', units: 'kPa', min: 0, max: 250, step: 20, at: 0, zones: [[0, 22, YELLOW], [210, 250, YELLOW]], numbers: [0, 20, 240] },
    { title: [], value: '10.00', units: '', min: 10, max: 19.4, step: 1, at: 10, zones: [[10, 12, RED], [17.5, 19.4, RED]], numbers: [10, 11, 19] },
    { title: ['Manifold', 'Air Temp'], value: '0', units: '°C', min: -40, max: 110, step: 10, at: 0, zones: [[-40, -15, RED], [-15, 0, YELLOW], [95, 100, YELLOW], [100, 110, RED]] }
]

const CX = 198
const CY = 185

function point(angle, r) {
    const a = angle * Math.PI / 180
    return [(CX + r * Math.sin(a)).toFixed(1), (CY - r * Math.cos(a)).toFixed(1)]
}

function drawText(name, y, text) {
    return text ? `<text class="${name}" x="${CX}" y="${y}">${text}</text>` : ''
}

function drawGauge(g) {
    const angleOf = v => 210 + (v - g.min) / (g.max - g.min) * 300
    let s = `<svg viewBox="0 0 398 371">`
    s += `<circle cx="${CX}" cy="${CY}" r="181" fill="url(#bezel)"/>`
    s += `<circle cx="${CX}" cy="${CY}" r="153" fill="url(#face)" stroke="#484848"/>`

    // coloured zones
    for (const [from, to, color] of g.zones) {
        const a = angleOf(from)
        const b = angleOf(to)
        const big = b - a > 180 ? 1 : 0
        s += `<path d="M${point(a, 147)}A147 147 0 ${big} 1 ${point(b, 147)}" fill="none" stroke="${color}" stroke-width="12"/>`
    }

    // ticks, four to each number
    const count = Math.floor((g.max - g.min) / g.step * 4 + 0.01)
    for (let i = 0; i <= count; i++) {
        const value = g.min + i * g.step / 4
        const a = angleOf(value)
        const major = i % 4 === 0
        const p = point(a, major ? 141 : 145)
        const q = point(a, major ? 153 : 152)
        s += `<path d="M${p}L${q}" stroke="#222" stroke-width="${major ? 3 : 2}"/>`
        if (major && (!g.numbers || g.numbers.includes(value))) {
            const text = String(value)
            const [x, y] = point(a, text.length === 1 ? 125 : 120)
            s += `<text class="number" x="${x}" y="${y}" dy="4">${text}</text>`
        }
    }

    s += drawText('scale', CY - 79, g.scale)
    if (g.title.length === 1) {
        s += drawText('title', CY - 53, g.title[0])
    } else {
        s += drawText('title', CY - 64, g.title[0])
        s += drawText('title', CY - 40, g.title[1])
    }
    s += drawText('value', CY + 59, g.value)
    s += drawText('value', CY + 84, g.units)

    // needle
    s += `<g transform="rotate(${angleOf(g.at)} ${CX} ${CY})">`
    s += `<path d="M${CX - 5} ${CY}L${CX - 1} ${CY - 148}h2L${CX + 5} ${CY}L${CX + 3} ${CY + 28}h-6z" fill="#9c2a30" opacity=".85"/>`
    s += `<path d="M${CX - 1} ${CY - 30}v-100h2v100z" fill="#b06468"/>`
    s += `</g>`
    s += `<circle cx="${CX}" cy="${CY}" r="23" fill="url(#hub)"/>`
    s += `<path d="M${point(angleOf(g.at), 22)}L${point(angleOf(g.at), -22)}" stroke="#555" stroke-width="4" opacity=".6"/>`
    return s + '</svg>'
}

document.getElementById('gauges').innerHTML = gauges.map(drawGauge).join('')
```
